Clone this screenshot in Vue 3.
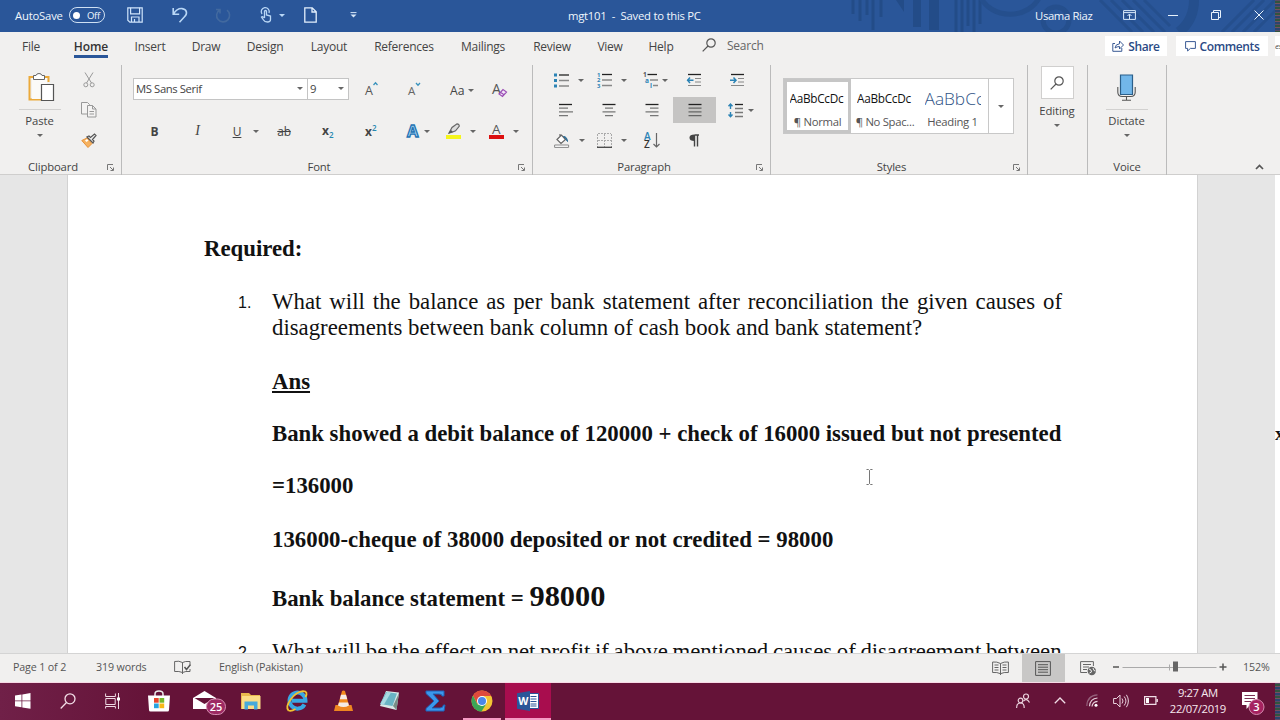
<template>
  <div class="window">
    <!-- title bar -->
    <header class="title-bar">
      <svg class="art" width="1275" height="32" viewBox="0 0 1275 32">
        <g stroke="#234c88" stroke-width="3">
          <path d="M853 0V14M860 0V21M867 0V15M873 0V30M881 0V17M956 0V32M962 0V32M968 0V26M974 0V32M980 0V24" />
        </g>
        <g fill="#234c88">
          <path d="M896 0h8v12zM913 0h8v27h-8zM929 0h10v30h-10z" />
        </g>
        <g fill="none" stroke="#254f8d">
          <circle cx="1056" cy="20" r="13" stroke-width="5" />
          <path d="M980 -4a32 28 0 0 0 60 0" stroke-width="5" />
          <path d="M1100 0l32 32M1111 0l32 32M1122 0l32 32M1133 0l32 32M1144 0l26 26" stroke-width="3" />
          <path d="M1194 0q0 20-15 32" stroke-width="10" />
          <path d="M1222 32l32-32M1232 32l32-32M1243 32l32-32M1254 32l24-24" stroke-width="3" />
        </g>
      </svg>
      <span class="autosave">AutoSave</span>
      <span class="toggle"><i></i>Off</span>
      <Icon name="save" />
      <Icon name="undo" />
      <Icon name="redo" />
      <span class="touch"><Icon name="touch" /><i class="arrow light"></i></span>
      <Icon name="page" />
      <Icon name="more" />
      <span class="doc-name">mgt101&nbsp; -&nbsp; Saved to this PC</span>
      <span class="user">Usama Riaz</span>
      <Icon name="ribbonMode" />
      <Icon name="minimize" />
      <Icon name="restore" />
      <Icon name="close" />
      <i class="edge"></i>
    </header>

    <!-- tabs -->
    <nav class="tabs">
      <span v-for="tab in tabs" :key="tab" :class="{ active: tab === 'Home' }">
        <b>{{ tab }}</b>
      </span>
      <span class="search"><Icon name="search" />Search</span>
      <span class="pill"><Icon name="share" />Share</span>
      <span class="pill"><Icon name="comment" />Comments</span>
      <i class="scrap">es</i>
    </nav>

    <!-- ribbon -->
    <section class="ribbon">
      <div class="group clipboard">
        <div class="body">
          <div class="big">
            <Icon name="paste" />
            <hr />
            <span>Paste</span>
            <i class="arrow"></i>
          </div>
          <div class="stack">
            <Icon name="cut" />
            <Icon name="copy" />
            <Icon name="painter" />
          </div>
        </div>
        <footer><span>Clipboard</span><Icon name="launcher" /></footer>
      </div>

      <div class="group font">
        <div class="body">
          <div class="font-row">
            <span class="combo">MS Sans Serif<i class="arrow"></i></span>
            <span class="combo size">9<i class="arrow"></i></span>
            <Icon name="grow" />
            <Icon name="shrink" />
            <span class="case">Aa<i class="arrow"></i></span>
            <Icon name="clear" />
          </div>
          <div class="style-row">
            <span class="bold">B</span>
            <span class="italic">I</span>
            <span class="split wide"><u>U</u><i class="arrow"></i></span>
            <span class="strike">ab</span>
            <span><Icon name="sub" /></span>
            <span><Icon name="sup" /></span>
            <span class="split near"><Icon name="effects" /><i class="arrow"></i></span>
            <span class="split"><Icon name="highlight" /><i class="arrow"></i></span>
            <span class="split"><Icon name="color" /><i class="arrow"></i></span>
          </div>
        </div>
        <footer><span>Font</span><Icon name="launcher" /></footer>
      </div>

      <div class="group paragraph">
        <div class="body">
          <span
            v-for="item in paragraphTools"
            :key="item.name"
            :class="{ drop: item.drop, tight: item.tight, on: item.on }"
          >
            <Icon :name="item.name" />
            <i v-if="item.drop" class="arrow"></i>
          </span>
        </div>
        <footer><span>Paragraph</span><Icon name="launcher" /></footer>
      </div>

      <div class="group styles">
        <div class="body">
          <div class="gallery">
            <div class="item picked"><b>AaBbCcDc</b><span>¶ Normal</span></div>
            <div class="item"><b>AaBbCcDc</b><span>¶ No Spac...</span></div>
            <div class="item heading"><b>AaBbCc</b><span>Heading 1</span></div>
            <div class="more"><i class="arrow"></i></div>
          </div>
        </div>
        <footer><span>Styles</span><Icon name="launcher" /></footer>
      </div>

      <div class="group editing">
        <div class="big">
          <div class="lens"><Icon name="search" /></div>
          <span>Editing</span>
          <i class="arrow"></i>
        </div>
      </div>

      <div class="group voice">
        <div class="body">
          <div class="big">
            <Icon name="mic" />
            <hr />
            <span>Dictate</span>
            <i class="arrow"></i>
          </div>
        </div>
        <footer><span>Voice</span></footer>
      </div>
      <div class="collapse"><Icon name="collapse" /></div>
    </section>

    <!-- document -->
    <main class="canvas">
      <article class="paper">
        <h1>Required:</h1>
        <ol>
          <li class="num">1.</li>
          <li>
            <p class="full">What will the balance as per bank statement after reconciliation the given causes of</p>
            <p class="second">disagreements between bank column of cash book and bank statement?</p>
            <p class="ans"><u>Ans</u></p>
            <p class="strong showed">Bank showed a debit balance of 120000 + check of 16000 issued but not presented</p>
            <p class="strong eq">=136000</p>
            <p class="strong cheque">136000-cheque of 38000 deposited or not credited = 98000</p>
            <p class="strong total">Bank balance statement = <big>98000</big></p>
          </li>
          <li class="num">2.</li>
          <li>
            <p class="squeezed">What will be the effect on net profit if above mentioned causes of disagreement between</p>
          </li>
        </ol>
        <Icon class="cursor" name="ibeam" />
      </article>
      <aside><b>x</b></aside>
    </main>

    <!-- status bar -->
    <div class="status">
      <span class="pages">Page 1 of 2</span>
      <span class="words">319 words</span>
      <Icon name="proof" />
      <span class="lang">English (Pakistan)</span>
      <span class="view"><Icon name="read" /></span>
      <span class="view on"><Icon name="print" /></span>
      <span class="view"><Icon name="web" /></span>
      <Icon name="zoomBar" />
      <span class="percent">152%</span>
    </div>

    <!-- taskbar -->
    <div class="taskbar">
      <span v-for="app in apps" :key="app" class="app" :class="app">
        <Icon :name="app" />
      </span>
      <div class="tray">
        <Icon name="people" />
        <Icon name="up" />
        <Icon name="wifi" />
        <Icon name="speaker" />
        <Icon name="battery" />
        <div class="clock"><span>9:27 AM</span><span>22/07/2019</span></div>
        <Icon name="notes" />
      </div>
      <i class="edge"></i>
    </div>
  </div>
</template>

<script setup>
import { h } from "vue";

const tabs = [
  "File",
  "Home",
  "Insert",
  "Draw",
  "Design",
  "Layout",
  "References",
  "Mailings",
  "Review",
  "View",
  "Help",
];

const paragraphTools = [
  { name: "bullets", drop: true },
  { name: "numbers", drop: true },
  { name: "levels", drop: true, tight: true },
  { name: "outdent" },
  { name: "indent" },
  { name: "left" },
  { name: "center" },
  { name: "right" },
  { name: "justify", on: true },
  { name: "spacing", drop: true, tight: true },
  { name: "shading", drop: true },
  { name: "borders", drop: true },
  { name: "sort" },
  { name: "pilcrow" },
];

const apps = [
  "start",
  "find",
  "taskview",
  "store",
  "mail",
  "explorer",
  "ie",
  "vlc",
  "notepad",
  "sigma",
  "chrome",
  "word",
];

const sans = 'font-family="Open Sans, sans-serif"';

// name: [width, height, markup]
const icons = {
  save: [16, 16, '<g fill="none" stroke="#cfe4fb" stroke-width="1.2"><path d="M.8.8h14.4v14.4H2.8l-2-2z"/><path d="M3.6.8v6h9v-6M4.5 15v-5h7.5v5M7.5 12v3"/></g>'],
  undo: [16, 16, '<g fill="none" stroke="#b9d7f6" stroke-width="1.6"><path d="M1.2 1v6.2h6M1.5 7Q5 1.2 10 1.6c5 .5 5.800 5 2.500 8.200L7.500 15.200"/></g>'],
  redo: [16, 16, '<g fill="none" stroke="#42699f" stroke-width="1.6"><path d="M4.500 3A6.500 6.500 0 1 0 12 3.200M1 2.500h4v4"/></g>'],
  touch: [12, 16, '<g fill="none" stroke="#b9d7f6" stroke-width="1.300"><path d="M2 7a4 4 0 1 1 7-1"/><path d="M4.500 11V4.200q1-1.400 2 0V8l4 1v3.500q0 2.500-3 2.500-3 0-4-2L1.500 10q1-1 3 1"/></g>'],
  page: [13, 16, '<path d="M.8.8h7.400l4 4v10.400H.8zM8 .8V5h4.200" fill="none" stroke="#e4f0fd" stroke-width="1.300"/>'],
  more: [7, 6, '<path d="M.5.6h6" stroke="#d5e6f8"/><path d="M.5 2.400h6L3.500 5.600z" fill="#d5e6f8"/>'],
  ribbonMode: [13, 10, '<path d="M.6.6h11.800v8.800H.6zM.6 2.600h11.800M6.500 9V4.300M4.500 6l2-2 2 2" fill="none" stroke="#d9eafb"/>'],
  minimize: [10, 10, '<path d="M0 5.500h10" stroke="#e8f2fc"/>'],
  restore: [10, 10, '<path d="M.5 2.500h7v7h-7zM2.500 2.500v-2h7v7h-2" fill="none" stroke="#e8f2fc"/>'],
  close: [10, 10, '<path d="M.5.5l9 9M9.500.5l-9 9" fill="none" stroke="#e8f2fc"/>'],
  search: [14, 14, '<g fill="none" stroke="#555" stroke-width="1.200"><circle cx="9" cy="5" r="4.200"/><path d="M6 8L.7 13.300"/></g>'],
  share: [12, 12, '<g fill="none" stroke="#3a5a94"><path d="M3 3.500H.8v7.800h9V8"/><path d="M3 8q.5-4 4.500-4.200V1l4 4-4 4V6.500Q5 6.500 3 8z"/></g>'],
  comment: [11, 11, '<path d="M.6.6h9.800v6.800h-5L2.600 10V7.400h-2z" fill="none" stroke="#3a5a94"/>'],
  paste: [27, 29, '<path d="M5 4H1.500v22.500H13M17 4h3.500v5" fill="none" stroke="#eba93a" stroke-width="2"/><path d="M4 5h15v21H4z" fill="#fbfaf8"/><path d="M5.500 6.500v-4H8q.5-2 3-2t3 2h2.500v4z" fill="#fff" stroke="#666"/><path d="M13.500 11.500h12v16h-12z" fill="#fff" stroke="#555" stroke-width="1.200"/>'],
  cut: [12, 16, '<g fill="none" stroke="#999"><path d="M2 .5l6.500 10.500M10 .5L3.500 11"/><circle cx="2.800" cy="12.800" r="2"/><circle cx="9.200" cy="12.800" r="2"/></g>'],
  copy: [16, 16, '<g fill="#f4f3f2" stroke="#999"><path d="M.5.5h6l2 2v9.500h-8z"/><path d="M6.500 3.500h5l3.500 3.500v8H6.500zM11.500 3.500V7H15M8.500 9.500h4.500M8.500 12h4.500"/></g>'],
  painter: [16, 15, '<path d="M.8 7.500L6 5l5 5.500-4 4z" fill="#f6b260" stroke="#e69138"/><path d="M4 7.500l2-1.500 1.500 1.500-2 1.500z" fill="#fff"/><path d="M6 4l6 6 1-2-1.500-1.500 3.500-4L13.500 1 9.500 4.500 8 3z" fill="#eee" stroke="#555" stroke-width="1.200"/>'],
  launcher: [7, 7, '<path d="M.5 6V.5H6M3 3l3 3M6.500 3.500v3h-3" fill="none" stroke="#777"/>'],
  grow: [14, 15, `<text x="0" y="13.500" font-size="12.500" fill="#555" ${sans}>A</text><path d="M8.500 4l2-2.200 2 2.200" fill="none" stroke="#3a93bd" stroke-width="1.300"/>`],
  shrink: [13, 15, `<text x="0" y="13.500" font-size="11.500" fill="#666" ${sans}>A</text><path d="M8 2l2 2.200 2-2.200" fill="none" stroke="#3a93bd" stroke-width="1.300"/>`],
  clear: [16, 17, `<text x="0" y="12" font-size="14" fill="#555" ${sans}>A</text><path d="M7 12l4-4.500 3.500 2.500-4 4.500zM8.500 10.300l3.500 2.500" fill="#f5e9fa" stroke="#9b4fb5" stroke-width="1.200"/>`],
  sub: [12, 15, `<text x="0" y="11" font-size="12" font-weight="700" fill="#444" ${sans}>x</text><text x="7" y="14" font-size="8" font-weight="600" fill="#2788b0" ${sans}>2</text>`],
  sup: [12, 15, `<text x="0" y="12" font-size="12" font-weight="700" fill="#444" ${sans}>x</text><text x="7" y="6.500" font-size="8" font-weight="600" fill="#2788b0" ${sans}>2</text>`],
  effects: [14, 16, `<text x="1" y="14" font-size="16.500" font-weight="700" fill="#a8d5f2" stroke="#2473b3" stroke-width="1.300" ${sans}>A</text>`],
  highlight: [15, 17, '<path d="M3 10l3-5.500L11 .8q2.500.2 2.200 2.500L9.500 7.800 5.500 9.500z" fill="#ddd" stroke="#666" stroke-width="1.200"/><path d="M2 11l3-4 2 2z" fill="#555"/><path d="M0 12h15v4H0z" fill="#f5f51c"/>'],
  color: [15, 17, `<text x="3" y="10.500" font-size="13.500" fill="#555" ${sans}>A</text><path d="M0 12h15v4H0z" fill="#dc1010"/>`],
  bullets: [15, 15, '<path d="M0 .5h3v3H0zM0 6h3v3H0zM0 11.500h3v3H0z" fill="#2b83b5"/><path d="M5 2h10" stroke="#222" stroke-width="1.300"/><path d="M5 7.500h10M5 13h10" stroke="#888" stroke-width="1.300"/>'],
  numbers: [15, 16, `<g font-size="5.800" font-weight="700" fill="#2b83b5" ${sans}><text x="0" y="4.500">1</text><text x="0" y="10">2</text><text x="0" y="15.500">3</text></g><path d="M5 2.500h10" stroke="#222" stroke-width="1.300"/><path d="M5 8h10M5 13.500h10" stroke="#888" stroke-width="1.300"/>`],
  levels: [15, 16, `<g font-size="6.500" font-weight="700" fill="#2b83b5" ${sans}><text x="0" y="4.800" fill="#555">1</text><text x="2" y="10.500">a</text><text x="7" y="15.500">i</text></g><path d="M4.500 2.500H14" stroke="#222" stroke-width="1.300"/><path d="M7 8h8M10 13.500h5" stroke="#888" stroke-width="1.300"/>`],
  outdent: [15, 14, '<path d="M1 1.500h13" stroke="#222" stroke-width="1.300"/><path d="M8 5.500h6M8 9h6M1 12.500h13" stroke="#888" stroke-width="1.200"/><path d="M0 7.200h6.500M3 4.500L.6 7.200 3 10" fill="none" stroke="#2b83b5" stroke-width="1.500"/>'],
  indent: [15, 14, '<path d="M1 1.500h13" stroke="#222" stroke-width="1.300"/><path d="M8 5.500h6M8 9h6M1 12.500h13" stroke="#888" stroke-width="1.200"/><path d="M0 7.200h6M3.500 4.500L6 7.200 3.500 10" fill="none" stroke="#2b83b5" stroke-width="1.500"/>'],
  left: [14, 14, '<path d="M0 1.500h13" stroke="#222" stroke-width="1.300"/><path d="M0 5.200h9M0 8.900h14M0 12.600h9" stroke="#777" stroke-width="1.300"/>'],
  center: [14, 14, '<path d="M.5 1.500h13" stroke="#222" stroke-width="1.300"/><path d="M3 5.200h8M.5 8.900h13M3 12.600h8" stroke="#777" stroke-width="1.300"/>'],
  right: [14, 14, '<path d="M.5 1.500h13" stroke="#222" stroke-width="1.300"/><path d="M5 5.200h8.500M.5 8.900h13M5 12.600h8.500" stroke="#777" stroke-width="1.300"/>'],
  justify: [14, 14, '<path d="M.5 1.500h13" stroke="#222" stroke-width="1.300"/><path d="M.5 5.200h13M.5 8.900h13M.5 12.600h13" stroke="#666" stroke-width="1.300"/>'],
  spacing: [16, 15, '<path d="M7 1.500h8" stroke="#222" stroke-width="1.300"/><path d="M7 5.500h8M7 9.500h8M7 13.500h8" stroke="#777" stroke-width="1.300"/><path d="M2.500 1v5M.5 3.300l2-2.300 2 2.300M2.500 9v5M.5 11.500l2 2.300 2-2.300" fill="none" stroke="#2b83b5" stroke-width="1.400"/>'],
  shading: [16, 15, '<path d="M3 6.500L7.500 2l4 4.500L7 10.500zM6 3.500V1" fill="#fff" stroke="#666" stroke-width="1.200"/><path d="M9.500 3.500q3.500 0 4 5l-2-3z" fill="#2b6c95" stroke="#2b6c95"/><path d="M.6 12h14v2.400H.6z" fill="#fff" stroke="#888"/>'],
  borders: [15, 15, '<path d="M.5 1v13M7.500 1v13M14.500 1v13M1 .5h13M1 7.500h13" fill="none" stroke="#aaa" stroke-dasharray="2 1"/><path d="M0 14.300h15" stroke="#444" stroke-width="1.300"/>'],
  sort: [16, 17, `<text x="0" y="7.800" font-size="10" font-weight="600" fill="#2b83b5" ${sans}>A</text><text x="0" y="16.300" font-size="10" font-weight="600" fill="#333" ${sans}>Z</text><path d="M12.500 1v14M9.500 12l3 3 3-3" fill="none" stroke="#666" stroke-width="1.200"/>`],
  pilcrow: [11, 13, '<path d="M5.500 1H10M5.500 1v11.500M8.500 1v11.500" fill="none" stroke="#444" stroke-width="1.400"/><path d="M5.500.5q-5 0-5 3.200t5 3.300z" fill="#444"/>'],
  mic: [19, 28, '<path d="M3.500 1h12v19.500h-12z" fill="#72b7ea" stroke="#2b5f8a" stroke-width="1.200"/><path d="M.8 13v5q0 4.500 4.500 4.500h8.400q4.500 0 4.500-4.500v-5M9.500 23v3M5 26.300h9" fill="none" stroke="#555" stroke-width="1.100"/>'],
  collapse: [9, 6, '<path d="M1 5l3.500-3.500L8 5" fill="none" stroke="#555" stroke-width="1.700"/>'],
  ibeam: [7, 16, '<path d="M.5.5h2l1 1 1-1h2M3.500 1.500v13M.5 15.500h2l1-1 1 1h2" fill="none" stroke="#777"/>'],
  proof: [17, 14, '<path d="M8.500 2.500Q5 .5.6 1.500v10q4.500-.5 7.900 1zM8.500 2.500Q11 1 16 1.500v3M8.500 12.500q3-1.500 7.500-1V9M8.500 2.500V14" fill="none" stroke="#666"/><path d="M10.500 7l2 2.500 4-5" fill="none" stroke="#555" stroke-width="1.500"/>'],
  read: [17, 14, '<path d="M8.500 2.500Q5 .5.6 1v10.500q4.500-.5 7.900 1.200 3.400-1.700 7.900-1.200V1Q12 .5 8.500 2.500V14M2.500 4h4M2.500 6.500h4M2.500 9h4M10.500 4h4M10.500 6.500h4M10.500 9h4" fill="none" stroke="#666"/>'],
  print: [16, 15, '<path d="M.6.6h14.800v13.800H.6zM3 3.700h10M3 6.200h10M3 8.700h10M3 11.200h10" fill="none" stroke="#555"/>'],
  web: [17, 15, '<path d="M7 11.500H.6V.6h12.800V5M3 3.500h8M3 6h6M3 8.500h4" fill="none" stroke="#666"/><circle cx="11.800" cy="10" r="4.200" fill="#666"/><path d="M9 8l2 1 .5 2-2 1M13 7l1 2.500 1.500.5" fill="none" stroke="#eee"/>'],
  zoomBar: [114, 14, '<path d="M0 7h6M106.500 7h7M110 3.500v7" stroke="#555" stroke-width="1.500"/><path d="M9.500 7.500h94M56.500 4.500v6" stroke="#aaa"/><path d="M60 1.500h5v10h-5z" fill="#666"/>'],
  start: [16, 16, '<path d="M0 2.500l6.500-1v6H0zM7.300 1.400L15.500 0v7.500H7.300zM0 8.300h6.500v6L0 13.300zM7.300 8.300h8.200v7.500l-8.200-1.300z" fill="#fff"/>'],
  find: [16, 16, '<g fill="none" stroke="#f3dfe8" stroke-width="1.300"><circle cx="10" cy="5.800" r="5"/><path d="M6.500 9.500L.7 15.500"/></g>'],
  taskview: [16, 16, '<path d="M.6 2V.5M.6 3.500h9.800M10.400.5v3M.6 2v1.500M.8 5.500h9.400v6H.8zM.6 15.500v-2h9.800v2M13.500 0v16" fill="none" stroke="#f0dce5"/><path d="M12 4.500h3v3h-3z" fill="#fff"/>'],
  store: [22, 22, '<path d="M7 6V4q0-3 4-3t4 3v2" fill="none" stroke="#eee" stroke-width="1.500"/><path d="M0 5.500h22L21 20q0 1.500-1.500 1.500h-17Q1 21.500 1 20z" fill="#fff"/><path d="M6 8h4.700v4.700H6z" fill="#e8452c"/><path d="M11.500 8h4.700v4.700h-4.700z" fill="#74b72a"/><path d="M6 13.500h4.700v4.700H6z" fill="#28a3e0"/><path d="M11.500 13.500h4.700v4.700h-4.700z" fill="#f7b818"/>'],
  mail: [34, 26, `<path d="M1 8l11.500-7L24 8v11H1z" fill="#fff"/><path d="M2.500 8h20L12.500 14z" fill="#651338"/><rect x="14.500" y="9" width="19" height="15.500" rx="7.700" fill="#9d2a63" stroke="#d58cb0"/><text x="24" y="21" text-anchor="middle" font-size="11" font-weight="600" fill="#fff" ${sans}>25</text>`],
  explorer: [20, 18, '<path d="M0 1h8l2 2h9v14H0z" fill="#e9b94e"/><path d="M1 4h18.500v13H1z" fill="#fbdd87"/><path d="M3.500 17.500V9.500h13v8h-3.500v-4H7v4z" fill="#47aadb"/>'],
  ie: [22, 22, '<path d="M18.500 14.500a8 8 0 1 1 1-3.700H6" fill="none" stroke="#38a8e4" stroke-width="4"/><path d="M2.500 20.500C-2 16 8 2 17 1.200q5.500 0 2.500 6M2.500 20.500q3 1 7-1.500" fill="none" stroke="#f2c230" stroke-width="1.800"/>'],
  vlc: [19, 22, '<path d="M1.500 15h16L19 21H0z" fill="#ee8620"/><path d="M8 1q1.500-1 3 0l4 14.500q-5.500 3-11 0z" fill="#f28a1c"/><path d="M7 4.800h5l1.300 4.500H5.800zM4.900 12.500h9.200l.9 3q-5.500 3-11 0z" fill="#f4ebe4"/>'],
  notepad: [21, 21, '<path d="M7 1l13 1.500L17.500 20 1 16z" fill="#d9e8e6"/><path d="M7 2l11 1.500-4.500 12.500L1 14z" fill="#69b4c4"/><path d="M8 2l4 .5L5 14.600l-3.500-.8z" fill="#a8dbe2"/><path d="M20 3l-2.500 17-3.500-4z" fill="#778e86"/>'],
  sigma: [21, 22, '<path d="M1 1h18v5h-2q0-2-3-2H8l6 7-7 7h8q3 0 3.500-3H20l-1 6H1v-2.500l8-7.500L1 3.500z" fill="#3c97ec" stroke="#1d63b9"/>'],
  chrome: [22, 22, '<circle cx="11" cy="11" r="10.500" fill="#f3c535"/><path d="M2 5.500A10.500 10.500 0 0 1 20.300 6H11l-4.500 8z" fill="#df4a3c"/><path d="M2 5.500a10.500 10.500 0 0 0 8.500 16l5-8-9 1z" fill="#3ba457"/><circle cx="11" cy="11" r="5" fill="#fff"/><circle cx="11" cy="11" r="4" fill="#4b87ea"/>'],
  word: [22, 20, `<path d="M11 2.500h10.500v15H11z" fill="#fff" stroke="#2a5699"/><path d="M13.500 5.500h6M13.500 8h6M13.500 10.500h6M13.500 13h6M13.500 15h6" stroke="#2a5699"/><path d="M0 2.200L13 0v20L0 17.800z" fill="#2a5699"/><text x="6.300" y="14" text-anchor="middle" font-size="10.500" font-weight="700" fill="#fff" ${sans}>W</text>`],
  people: [14, 16, '<g fill="none" stroke="#ead3de" stroke-width="1.200"><circle cx="10" cy="3.500" r="2.500"/><circle cx="4.500" cy="7.500" r="2.300"/><path d="M7.500 8q3-3.500 6 1.500M.6 15q0-5 3.900-5t3.700 5"/></g>'],
  up: [12, 7, '<path d="M.8 6.200L6 1l5.200 5.200" fill="none" stroke="#f0dde6" stroke-width="1.300"/>'],
  wifi: [12, 13, '<g fill="none" stroke-width="1.200"><path d="M.8 12Q1 1.500 11.500.8" stroke="#94607a"/><path d="M3.500 12.300q.5-7.800 8-8.300M6 12.500q.5-4.800 5.500-5.200" stroke="#e6cdd9"/></g><circle cx="10" cy="11.300" r="1.500" fill="#fff"/>'],
  speaker: [16, 14, '<path d="M.6 4.500h2.900L7 1v12L3.500 9.500H.6zM9 4.500q2 2.500 0 5M11.200 2.500q3.500 4.500 0 9M13.400.8q4 6.200 0 12.400" fill="none" stroke="#ead3de"/>'],
  battery: [14, 9, '<path d="M.6.6h11.300v7.800H.6zM13.300 3v3" fill="none" stroke="#f0dde6" stroke-width="1.200"/><path d="M2 2h3v5H2z" fill="#fff"/>'],
  notes: [26, 25, `<path d="M1 1h15.500v13H9l-3.500 4V14H1z" fill="#fff"/><path d="M3.500 4.500h10.500M3.500 7.500h10.500M3.500 10.500h7" stroke="#7a3255"/><circle cx="15.500" cy="16" r="7.500" fill="#a5225f" stroke="#d58cb0"/><text x="15.500" y="20" text-anchor="middle" font-size="11" font-weight="600" fill="#fff" ${sans}>3</text>`],
};

const Icon = (props) => {
  const [width, height, markup] = icons[props.name];
  return h("svg", {
    width,
    height,
    viewBox: `0 0 ${width} ${height}`,
    innerHTML: markup,
  });
};
Icon.props = ["name"];
</script>

<style>
body {
  margin: 0;
  overflow: hidden;
}
</style>

<style scoped>
.window {
  width: 1280px;
  height: 720px;
  display: flex;
  flex-direction: column;
  overflow: hidden;
  background: #f1f0ef;
  color: #444;
  font: 11.3px "Open Sans", "Noto Sans", sans-serif;
  white-space: nowrap;
}

svg {
  display: block;
  flex: none;
  overflow: visible;
}

.arrow {
  flex: none;
  border: 3px solid transparent;
  border-top-color: #666;
  border-bottom: 0;
}

.arrow.light {
  border-top-color: #b9d7f6;
}

/* title bar */
.title-bar {
  position: relative;
  height: 32px;
  flex: none;
  box-sizing: border-box;
  padding-bottom: 2px;
  display: grid;
  grid-template-columns: 69px 58px 45px 43px 45px 44px 46px 218px 467px 88px 45px 43px 43px 21px 5px;
  align-items: center;
  background: #2a5699;
  color: #f0f6fd;
}

.title-bar > svg {
  z-index: 1;
}

.title-bar > .art {
  position: absolute;
  z-index: 0;
  left: 0;
  top: 0;
  overflow: hidden;
}

.title-bar > span {
  position: relative;
}

.autosave {
  padding-left: 15px;
  letter-spacing: -0.2px;
}

.toggle {
  width: 34px;
  height: 14px;
  border: 1px solid #cfe0f3;
  border-radius: 8px;
  display: flex;
  align-items: center;
  gap: 7px;
  font-size: 9.5px;
  letter-spacing: -0.3px;
}

.toggle i {
  width: 7px;
  height: 7px;
  margin-left: 3px;
  border-radius: 50%;
  background: #fff;
}

.touch {
  display: flex;
  align-items: center;
  gap: 7px;
}

.doc-name {
  letter-spacing: -0.25px;
}

.user {
  letter-spacing: -0.35px;
}

.edge {
  align-self: stretch;
  background: repeating-linear-gradient(#5b4a66 0 1px, #31553f 1px 3px, #74515f 3px 4px, #2a456f 4px 6px);
}

.title-bar .edge {
  margin-bottom: -2px;
}

/* tabs */
.tabs {
  height: 28px;
  flex: none;
  display: grid;
  grid-template-columns: 62px 58px 60px 52px 66px 62px 88px 70px 68px 48px 54px 417px 62px 9px 92px 7px 5px;
  align-items: center;
  font-size: 12px;
  letter-spacing: -0.25px;
  text-align: center;
}

.tabs b {
  display: block;
  width: fit-content;
  height: 20px;
  margin: 0 auto;
  line-height: 23px;
  font-weight: 400;
  border-bottom: 3px solid transparent;
}

.tabs .active b {
  font-weight: 600;
  letter-spacing: -0.1px;
  color: #333;
  border-color: #2a5699;
}

.tabs .search {
  display: flex;
  align-items: center;
  gap: 11px;
  padding: 0 0 2px 14px;
  color: #666;
}

.pill {
  height: 20px;
  display: flex;
  align-items: center;
  justify-content: center;
  gap: 4px;
  background: #fff;
  color: #2a4a85;
  font-weight: 600;
  letter-spacing: -0.4px;
}

.pill + .pill {
  grid-column: 15;
}

.scrap {
  grid-column: 17;
  overflow: hidden;
  background: #fff;
  font-size: 8px;
  line-height: 20px;
}

/* ribbon */
.ribbon {
  height: 115px;
  flex: none;
  box-sizing: border-box;
  display: grid;
  grid-template-columns: 122px 411px 238px 257px 60px 79px 113px;
  border-bottom: 1px solid #cfcecd;
  padding: 5px 0 4px;
}

.group {
  display: flex;
  flex-direction: column;
  border-right: 1px solid #bbb;
}

.body {
  height: 93px;
}

.group footer {
  position: relative;
  flex: 1;
  line-height: 18px;
  text-align: center;
  letter-spacing: -0.15px;
}

.clipboard footer,
.paragraph footer,
.styles footer {
  padding-right: 15px;
}

.font footer {
  padding-right: 16px;
}

.group footer svg {
  position: absolute;
  right: 7px;
  top: 6px;
}

.big {
  display: flex;
  flex-direction: column;
  align-items: center;
  line-height: 16px;
  letter-spacing: -0.1px;
}

.big hr {
  width: 42px;
  height: 1px;
  border: 0;
  margin: 7px 0 3px;
  background: #d2d1d0;
}

.big .arrow {
  margin-top: 5px;
}

.clipboard .body {
  display: grid;
  grid-template-columns: 79px 20px;
}

.clipboard .big {
  padding-top: 8px;
}

.clipboard .big svg {
  margin-left: 4px;
}

.stack {
  display: grid;
  grid-template-rows: 30px 30px 30px;
  place-items: center;
}

.font .body {
  padding-left: 11px;
}

.font-row {
  display: grid;
  grid-template-columns: 175px 41px 16px 43px 42px 43px 20px;
  height: 24px;
  padding-top: 13px;
}

.combo {
  box-sizing: border-box;
  height: 22px;
  display: flex;
  align-items: center;
  justify-content: space-between;
  padding: 0 4px 1px 2px;
  background: #fff;
  border: 1px solid #c4c4c4;
  letter-spacing: -0.4px;
}

.combo.size {
  border-left: 0;
}

.font-row svg:nth-child(3) {
  grid-column: 4;
  margin-top: 3px;
}

.font-row svg:nth-child(4) {
  margin-top: 3px;
}

.case {
  display: flex;
  align-items: center;
  gap: 4px;
  font-size: 12.2px;
}

.font-row svg:last-child {
  margin: 4px 0 0 -1px;
}

.style-row {
  display: grid;
  grid-template-columns: 43px 43px 44px 42px 45px 42px 52px 34px 52px;
  height: 24px;
  margin-top: 17px;
  align-items: center;
  justify-items: center;
  font-size: 12px;
}

.bold {
  font-weight: 700;
}

.italic {
  font: italic 14px "Liberation Serif", serif;
}

.strike {
  text-decoration: line-through;
  letter-spacing: -0.3px;
}

.split {
  display: flex;
  align-items: center;
  gap: 9px;
}

.split.wide {
  gap: 12px;
  padding-left: 10px;
}

.split.near {
  gap: 4px;
}

.paragraph .body {
  box-sizing: border-box;
  display: grid;
  grid-template-columns: repeat(5, 43px);
  grid-template-rows: 30px 30px 30px;
  padding-left: 11px;
}

.paragraph .body span {
  display: flex;
  align-items: center;
  justify-content: center;
  gap: 9px;
}

.paragraph .body .drop {
  padding-left: 7px;
}

.paragraph .body .tight {
  gap: 4px;
}

.paragraph .on {
  margin: 2px 0;
  background: #c5c4c3;
}

.gallery {
  box-sizing: border-box;
  width: 231px;
  height: 56px;
  margin: 13px 0 0 12px;
  display: grid;
  grid-template-columns: 67px 68px 69px 25px;
  background: #fff;
  border: 1px solid #c8c8c8;
}

.item {
  display: flex;
  flex-direction: column;
  align-items: center;
  gap: 6px;
  padding: 11px 4px 0;
  line-height: 17px;
  overflow: hidden;
  letter-spacing: -0.3px;
  color: #555;
}

.item b {
  width: 56px;
  overflow: hidden;
  font: 11.8px/17px "Open Sans", sans-serif;
  color: #111;
}

.item.picked {
  padding: 8px 2px 0;
  border: 3px solid #c6c6c6;
}

.item.heading {
  padding-right: 6px;
}

.item.heading b {
  font: 300 17.3px/17px "Open Sans", sans-serif;
  letter-spacing: 0;
  color: #2f5486;
}

.more {
  display: grid;
  place-items: center;
  border-left: 1px solid #c8c8c8;
}

.lens {
  width: 31px;
  height: 31px;
  margin: 1px 0 4px;
  display: grid;
  place-items: center;
  background: #fff;
  border: 1px solid #d0cfce;
}

.editing .big {
  padding-right: 1px;
}

.voice .big {
  padding: 9px 1px 0 0;
}

.collapse {
  display: flex;
  align-items: flex-end;
  justify-content: flex-end;
  padding: 0 16px 6px 0;
}

/* document */
.canvas {
  height: 478px;
  flex: none;
  display: grid;
  grid-template-columns: 1fr 5px;
  padding-left: 67px;
  background: #e6e6e6;
}

.paper {
  position: relative;
  width: 1131px;
  height: 478px;
  box-sizing: border-box;
  padding: 61px 135px 0 136px;
  overflow: hidden;
  background: #fff;
  border: 1px solid #d2d2d2;
  border-width: 0 1px;
  color: #111;
  font: 22.8px/26px "Liberation Serif", serif;
}

.paper h1 {
  margin: 0 0 27px;
  font: inherit;
  font-weight: 700;
}

.paper ol {
  margin: 0;
  padding: 0;
  list-style: none;
  display: grid;
  grid-template-columns: 34px 34px 790px;
}

.paper p {
  margin: 0;
}

.num {
  grid-column: 2;
  font: 16px/28px "Liberation Sans", sans-serif;
}

.num + li {
  grid-column: 3;
}

.full {
  white-space: normal;
  text-align-last: justify;
}

.squeezed {
  letter-spacing: -0.06px;
  word-spacing: -0.9px;
}

.paper .ans {
  margin: 28px 0 26px;
  font-weight: 700;
}

.strong {
  font-weight: 700;
}

.showed {
  letter-spacing: -0.012px;
}

.ans u {
  text-underline-offset: 2px;
}

.paper .eq {
  margin-top: 26px;
}

.paper .cheque {
  margin-top: 28px;
  letter-spacing: 0.015px;
}

.paper .total {
  margin: 28px 0 27px;
  height: 31px;
  line-height: 31px;
}

.total big {
  font-size: 30.4px;
}

.cursor {
  position: absolute;
  left: 798px;
  top: 294px;
}

.canvas aside {
  overflow: hidden;
  background: #fff;
  color: #111;
  font: 19px/26px "Liberation Serif", serif;
  padding-top: 246px;
}

/* status bar */
.status {
  height: 30px;
  flex: none;
  box-sizing: border-box;
  display: grid;
  grid-template-columns: 96px 78px 45px 760px 43px 43px 48px 130px 37px;
  align-items: center;
  border-top: 1px solid #d4d4d4;
  border-bottom: 1px solid #f7d9e5;
  font-size: 10.7px;
  letter-spacing: -0.15px;
  color: #555;
}

.status > span,
.status > svg {
  margin-top: -2px;
}

.pages {
  padding-left: 13px;
}

.status .view {
  height: 28px;
  margin: 0;
  display: grid;
  place-items: center;
  padding-right: 1px;
}

.view.on {
  background: #c8c7c6;
}

/* taskbar */
.taskbar {
  height: 37px;
  flex: none;
  display: grid;
  grid-template-columns: 45px 45px 46px repeat(9, 46.1px) 457px 267px 5px;
  grid-template-rows: 37px;
  background: linear-gradient(90deg, #702048, #651338 12%);
}

.app {
  box-sizing: border-box;
  height: 37px;
  display: grid;
  place-items: center;
  padding-bottom: 2px;
}

.app.mail {
  padding: 2px 0 0 8px;
}

.app.chrome,
.app.word {
  border-bottom: 2px solid #f59bc4;
  padding-bottom: 0;
}

.app.chrome {
  margin: 0 4px;
}

.app.word {
  background: #a80d4e;
}

.tray {
  grid-column: 13 / 15;
  display: grid;
  grid-template-columns: 38px 32px 27px 31px 22px 76px 33px;
  align-items: center;
  justify-content: end;
  padding: 0 0 2px;
}

.clock {
  display: flex;
  flex-direction: column;
  align-items: center;
  padding-right: 12px;
  line-height: 16px;
  letter-spacing: -0.4px;
  color: #f6e8ef;
}

.tray svg:last-child {
  margin: 5px 0 0 -1px;
}

.taskbar .edge {
  grid-column: 15;
}
</style>
